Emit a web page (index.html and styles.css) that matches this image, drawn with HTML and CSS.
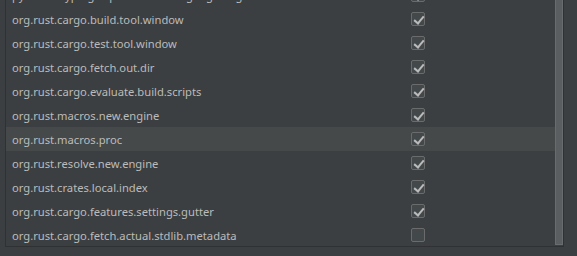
FILE: index.html
```html
<!DOCTYPE html>
<html lang="en">
<head>
    <meta charset="UTF-8">
    <meta name="viewport" content="width=device-width, initial-scale=1.0">
    <title>Experimental Features</title>
    <link rel="stylesheet" href="styles.css">
</head>
<body>

    <!-- Feature table with scrollbar -->
    <div class="panel">
        <div class="rows">
            <div class="row">
                <span class="name">pycharm.typing.experimental.language.engine</span>
                <span class="check on"></span>
            </div>
            <div class="row">
                <span class="name">org.rust.cargo.build.tool.window</span>
                <span class="check on"></span>
            </div>
            <div class="row">
                <span class="name">org.rust.cargo.test.tool.window</span>
                <span class="check on"></span>
            </div>
            <div class="row">
                <span class="name">org.rust.cargo.fetch.out.dir</span>
                <span class="check on"></span>
            </div>
            <div class="row">
                <span class="name">org.rust.cargo.evaluate.build.scripts</span>
                <span class="check on"></span>
            </div>
            <div class="row">
                <span class="name">org.rust.macros.new.engine</span>
                <span class="check on"></span>
            </div>
            <div class="row selected">
                <span class="name">org.rust.macros.proc</span>
                <span class="check on"></span>
            </div>
            <div class="row">
                <span class="name">org.rust.resolve.new.engine</span>
                <span class="check on"></span>
            </div>
            <div class="row">
                <span class="name">org.rust.crates.local.index</span>
                <span class="check on"></span>
            </div>
            <div class="row">
                <span class="name">org.rust.cargo.features.settings.gutter</span>
                <span class="check on"></span>
            </div>
            <div class="row">
                <span class="name">org.rust.cargo.fetch.actual.stdlib.metadata</span>
                <span class="check"></span>
            </div>
        </div>
        <div class="scrollbar">
            <div class="thumb"></div>
        </div>
    </div>

</body>
</html>
```

FILE: styles.css
```css
/* Basic Reset */
* {
    margin: 0;
    padding: 0;
    box-sizing: border-box;
}

body {
    font-family: 'Noto Sans', 'Open Sans', sans-serif;
    font-size: 11.2px;
    background-color: #3c3f41;
    color: #bbbbbb;
    height: 256px;
    overflow: hidden;
}

/* Bordered table area */
.panel {
    display: flex;
    margin-left: 5px;
    margin-top: -17px;
    width: 559px;
    height: 264px;
    border-left: 1px solid #2f3133;
    border-right: 1px solid #2f3133;
    border-bottom: 1px solid #2f3133;
}

.rows {
    flex: 1;
}

.row {
    display: flex;
    align-items: center;
    height: 24px;
    padding-left: 6px;
}

.row.selected {
    background-color: #45494a;
}

.name {
    width: 399px;
    white-space: nowrap;
    overflow: hidden;
}

/* Checkbox */
.check {
    position: relative;
    width: 14px;
    height: 14px;
    border: 1px solid #6b6b6b;
    border-radius: 2px;
    background-color: #43494a;
}

.check.on::after {
    content: "";
    position: absolute;
    left: 4px;
    top: 1px;
    width: 4px;
    height: 8px;
    border-right: 2px solid #bbbbbb;
    border-bottom: 2px solid #bbbbbb;
    transform: rotate(40deg);
}

/* Scrollbar */
.scrollbar {
    width: 8px;
    padding-bottom: 1px;
}

.thumb {
    height: 100%;
    background-color: #5b5e60;
    border: 1px solid #696c6e;
}
```
